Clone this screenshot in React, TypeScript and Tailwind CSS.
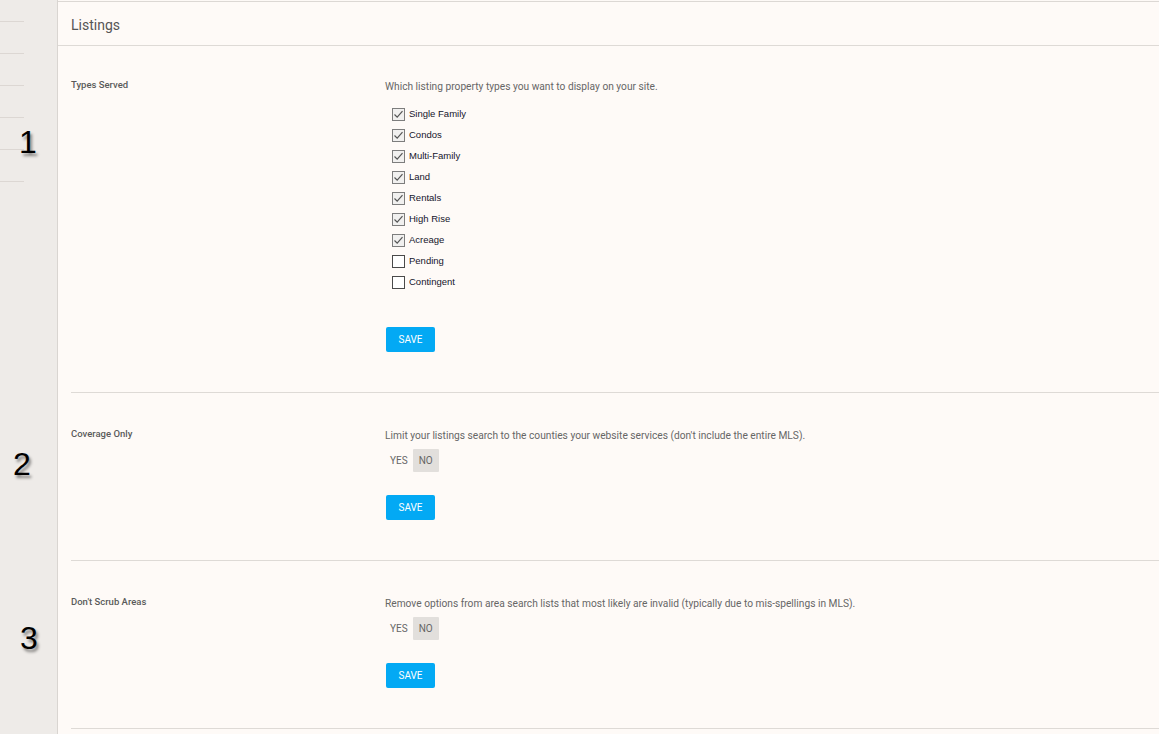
import React from "react";

const roboto = { fontFamily: "Roboto, 'Noto Sans', sans-serif" };
const arial = { fontFamily: "'Liberation Sans', Arial, sans-serif" };

const types = [
  { name: "Single Family", on: true },
  { name: "Condos", on: true },
  { name: "Multi-Family", on: true },
  { name: "Land", on: true },
  { name: "Rentals", on: true },
  { name: "High Rise", on: true },
  { name: "Acreage", on: true },
  { name: "Pending", on: false },
  { name: "Contingent", on: false },
];

const Check = ({ on }: { on: boolean }) => (
  <span
    className={
      on
        ? "flex h-[13px] w-[13px] items-center justify-center border border-[#7d7d7d] bg-[#f1f0ef]"
        : "flex h-[13px] w-[13px] items-center justify-center border border-[#4a4a4a] bg-white"
    }
  >
    {on && (
      <svg width="11" height="11" viewBox="0 0 11 11">
        <path d="M1.5 5.5 L4.2 8.2 L9.5 2.2" fill="none" stroke="#555" strokeWidth="1.2" />
      </svg>
    )}
  </span>
);

const SaveButton = ({ className }: { className: string }) => (
  <button
    className={
      "ml-px flex h-[25px] w-[49px] items-center justify-center rounded-[2px] bg-[#03a9f4] text-[10px] text-white " +
      className
    }
    style={roboto}
  >
    SAVE
  </button>
);

const YesNo = ({ className }: { className: string }) => (
  <div className={"flex items-center text-[10px] text-[#666] " + className} style={roboto}>
    <span className="flex h-[23px] items-center px-[5px]">YES</span>
    <span className="flex h-[23px] items-center rounded-[1px] bg-[#e2dfdc] px-[6px]">NO</span>
  </div>
);

const Section = ({
  label,
  top,
  children,
}: {
  label: string;
  top: string;
  children: React.ReactNode;
}) => (
  <div className={"flex border-b border-[#dedad6] pb-[40px] " + top}>
    <div className="w-[314px] shrink-0 text-[9.5px] font-medium leading-[12px] text-[#5a5a5a]" style={roboto}>
      {label}
    </div>
    <div className="flex flex-col items-start">{children}</div>
  </div>
);

const Desc = ({ text, className }: { text: string; className: string }) => (
  <p className={"text-[10.2px] leading-[12px] text-[#666] " + className} style={roboto}>
    {text}
  </p>
);

export default function App() {
  return (
    <div className="flex h-[734px] w-[1159px] overflow-hidden bg-[#fdf9f6]">
      {/* sidebar */}
      <div className="relative w-[58px] shrink-0 border-r border-[#d9d5d1] bg-[#eeebe8]">
        <div className="flex flex-col pt-[21px]">
          {[0, 1, 2, 3, 4, 5].map((i) => (
            <div key={i} className={"h-px w-[24px] bg-[#dcd7d3] " + (i === 0 ? "" : "mt-[31px]")} />
          ))}
        </div>
        {/* annotation numbers */}
        <span
          className="absolute left-[19px] top-[126px] text-[32px] leading-[32px] text-black [text-shadow:2px_3px_3px_rgba(0,0,0,0.45)]"
          style={arial}
        >
          1
        </span>
        <span
          className="absolute left-[13px] top-[448px] text-[32px] leading-[32px] text-black [text-shadow:2px_3px_3px_rgba(0,0,0,0.45)]"
          style={arial}
        >
          2
        </span>
        <span
          className="absolute left-[20px] top-[622px] text-[32px] leading-[32px] text-black [text-shadow:2px_3px_3px_rgba(0,0,0,0.45)]"
          style={arial}
        >
          3
        </span>
      </div>

      {/* main panel */}
      <div className="mt-px flex min-w-0 flex-1 flex-col border-t border-[#dcd8d4] bg-[#fefaf7]">
        <div className="flex h-[44px] items-center border-b border-[#dedad6] px-[13px] pt-[3px]">
          <h1 className="text-[14px] font-normal text-[#555]" style={roboto}>
            Listings
          </h1>
        </div>

        <div className="pl-[13px]">
          <Section label="Types Served" top="pt-[33px]">
            <Desc text="Which listing property types you want to display on your site." className="mt-[2px]" />
            <div className="mt-[11px] flex flex-col">
              {types.map((t) => (
                <label key={t.name} className="flex h-[21px] items-center pl-[7px]">
                  <Check on={t.on} />
                  <span className="ml-[4px] text-[9.5px] text-[#14142b]" style={arial}>
                    {t.name}
                  </span>
                </label>
              ))}
            </div>
            <SaveButton className="mt-[34px]" />
          </Section>

          <Section label="Coverage Only" top="pt-[35px]">
            <Desc
              text="Limit your listings search to the counties your website services (don't include the entire MLS)."
              className="mt-[2px]"
            />
            <YesNo className="mt-[7px]" />
            <SaveButton className="mt-[23px]" />
          </Section>

          <Section label="Don't Scrub Areas" top="pt-[35px]">
            <Desc
              text="Remove options from area search lists that most likely are invalid (typically due to mis-spellings in MLS)."
              className="mt-[2px]"
            />
            <YesNo className="mt-[7px]" />
            <SaveButton className="mt-[23px]" />
          </Section>
        </div>
      </div>
    </div>
  );
}
